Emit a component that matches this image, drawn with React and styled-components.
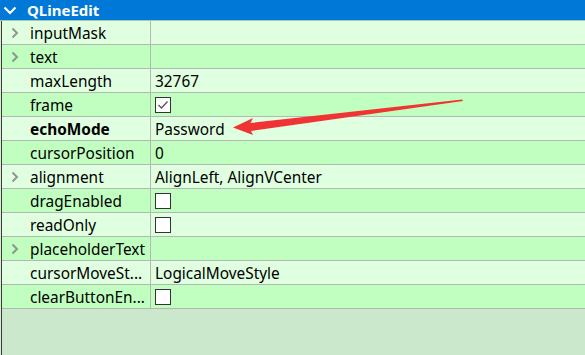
import React from "react";
import styled, { createGlobalStyle } from "styled-components";

const Global = createGlobalStyle`
  html, body { margin: 0; padding: 0; }
  body { width: 585px; height: 355px; overflow: hidden; background: #cce8cc; font-family: "Noto Sans", "Open Sans", sans-serif; }
`;

const Panel = styled.div`
  position: relative;
  width: 585px;
  height: 355px;
  display: flex;
  flex-direction: column;
  background: #cce8cc;
`;

const Header = styled.div`
  height: 20px;
  background: #0078d7;
  display: flex;
  align-items: center;
  color: #fff;
  font-weight: 700;
  font-size: 15px;
  border-bottom: 1px solid #a8c8b0;
`;

const HeaderIcon = styled.span`
  width: 27px;
  display: flex;
  align-items: center;
  padding-left: 3px;
  box-sizing: border-box;
`;

const Body = styled.div`
  flex: 1;
  padding-left: 1px;
  background: #d8ecd8;
  display: flex;
`;

const Rows = styled.div`
  flex: 1;
  border-left: 1px solid #3a3a3a;
  background: #cce8cc;
  display: flex;
  flex-direction: column;
`;

const Row = styled.div`
  display: grid;
  grid-template-columns: 149px 1fr;
  height: 23px;
  border-bottom: 1px solid #b2b8b2;
  background: ${(p) => (p.$alt ? "#c0ffc0" : "#e0ffe0")};
  font-size: 15.4px;
  color: #000;
`;

const LabelCell = styled.div`
  display: flex;
  align-items: center;
  padding-top: 2px;
  box-sizing: border-box;
  border-right: 1px solid #b2b8b2;
  font-weight: ${(p) => (p.$bold ? 700 : 400)};
  white-space: nowrap;
  overflow: hidden;
`;

const Expander = styled.span`
  width: 28px;
  flex: none;
  display: flex;
  align-items: center;
  padding-left: 9px;
  margin-top: -2px;
  box-sizing: border-box;
`;

const ValueCell = styled.div`
  display: flex;
  align-items: center;
  padding-left: 4px;
  padding-top: 2px;
  box-sizing: border-box;
  white-space: nowrap;
`;

const Check = styled.span`
  width: 14px;
  height: 14px;
  border: 1px solid #333;
  background: #fff;
  display: flex;
  align-items: center;
  justify-content: center;
  margin-top: -1px;
`;

const Arrow = styled.svg`
  position: absolute;
  left: 0;
  top: 0;
  pointer-events: none;
`;

const Chevron = () => (
  <svg width="9" height="12" viewBox="0 0 9 12">
    <path d="M1.5 1.5 L6 6 L1.5 10.5" fill="none" stroke="#8c988c" strokeWidth="2" />
  </svg>
);

const rows = [
  { name: "inputMask", expand: true },
  { name: "text", expand: true },
  { name: "maxLength", value: "32767" },
  { name: "frame", check: true, checked: true },
  { name: "echoMode", value: "Password", bold: true },
  { name: "cursorPosition", value: "0" },
  { name: "alignment", value: "AlignLeft, AlignVCenter", expand: true },
  { name: "dragEnabled", check: true },
  { name: "readOnly", check: true },
  { name: "placeholderText", expand: true },
  { name: "cursorMoveSt...", value: "LogicalMoveStyle" },
  { name: "clearButtonEn...", check: true },
];

export default function App() {
  return (
    <Panel>
      <Global />
      <Header>
        <HeaderIcon>
          <svg width="14" height="9" viewBox="0 0 14 9">
            <path d="M1.5 1.5 L7 7 L12.5 1.5" fill="none" stroke="#fff" strokeWidth="2.2" />
          </svg>
        </HeaderIcon>
        QLineEdit
      </Header>
      <Body>
        <Rows>
          {rows.map((r, i) => (
            <Row key={r.name} $alt={i % 2 === 1}>
              <LabelCell $bold={r.bold}>
                <Expander>{r.expand && <Chevron />}</Expander>
                {r.name}
              </LabelCell>
              <ValueCell>
                {r.check ? (
                  <Check>
                    {r.checked && (
                      <svg width="12" height="10" viewBox="0 0 12 10">
                        <path d="M1.5 5 L4.5 8 L10.5 1.5" fill="none" stroke="#555" strokeWidth="1.3" />
                      </svg>
                    )}
                  </Check>
                ) : (
                  r.value
                )}
              </ValueCell>
            </Row>
          ))}
        </Rows>
      </Body>
      <Arrow width="585" height="355" viewBox="0 0 585 355">
        <polygon
          points="233,127.5 253,118 250.5,123 462,99.5 463,101 251,131 253,135"
          fill="#f03434"
        />
      </Arrow>
    </Panel>
  );
}
